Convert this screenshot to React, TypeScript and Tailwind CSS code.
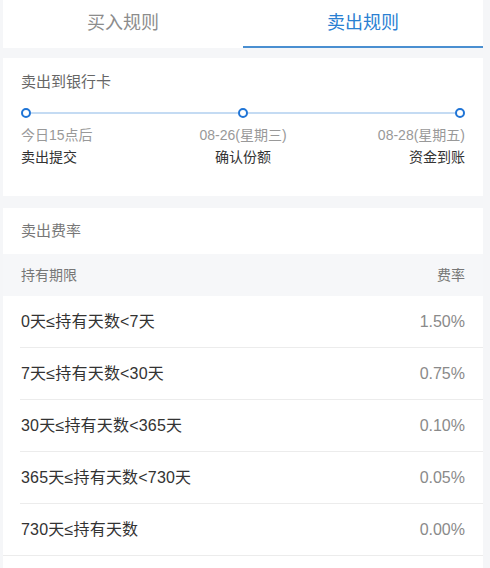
import React from "react";

const font = { fontFamily: '"Liberation Sans", "Noto Sans CJK SC", sans-serif' };

const rows = [
  ["0天≤持有天数<7天", "1.50%"],
  ["7天≤持有天数<30天", "0.75%"],
  ["30天≤持有天数<365天", "0.10%"],
  ["365天≤持有天数<730天", "0.05%"],
  ["730天≤持有天数", "0.00%"],
];

function Dot() {
  return <div className="w-[10px] h-[10px] rounded-full border-[2.5px] border-[#1f74d6] bg-white shrink-0" />;
}

export default function App() {
  return (
    <div className="w-[490px] h-[568px] overflow-hidden bg-[#f5f6f8] pl-[3px]" style={font}>
      <div className="w-[480px]">
        {/* Tabs */}
        <div className="flex h-[48px] bg-white">
          <div className="flex-1 flex items-center justify-center pb-[2px] text-[18px] text-[#8c8c8c]">买入规则</div>
          <div className="flex-1 flex items-center justify-center text-[18px] text-[#2a80d2] border-b-2 border-[#4a8fd1]">卖出规则</div>
        </div>

        {/* Sell to bank card */}
        <div className="mt-[10px] h-[138px] bg-white px-[18px] pt-[13px]">
          <div className="text-[15px] leading-[22px] text-[#666]">卖出到银行卡</div>
          <div className="mt-[15px] flex items-center">
            <Dot />
            <div className="flex-1 h-[2px] bg-[#c4dbf3]" />
            <Dot />
            <div className="flex-1 h-[2px] bg-[#c4dbf3]" />
            <Dot />
          </div>
          <div className="mt-[7px] grid grid-cols-3 text-[14px] leading-[20px] text-[#999]">
            <div className="text-left">今日15点后</div>
            <div className="text-center">08-26(星期三)</div>
            <div className="text-right">08-28(星期五)</div>
          </div>
          <div className="mt-[2px] grid grid-cols-3 text-[14px] leading-[20px] text-[#333]">
            <div className="text-left">卖出提交</div>
            <div className="text-center">确认份额</div>
            <div className="text-right">资金到账</div>
          </div>
        </div>

        {/* Fee rate */}
        <div className="mt-[12px] bg-white h-[360px]">
          <div className="h-[46px] flex items-center px-[18px] text-[15px] text-[#777]">卖出费率</div>
          <div className="h-[42px] flex items-center justify-between px-[18px] bg-[#f6f7f9] text-[14px] text-[#777]">
            <span>持有期限</span>
            <span>费率</span>
          </div>
          {rows.map(([label, value], i) => (
            <div
              key={label}
              className={
                i === rows.length - 1
                  ? "h-[52px] flex items-center justify-between pl-[18px] pr-[18px] border-b border-[#ececec]"
                  : "h-[52px] flex items-center justify-between ml-[17px] pl-[1px] pr-[18px] border-b border-[#ececec]"
              }
            >
              <span className="text-[16px] tracking-[0.2px] text-[#333]">{label}</span>
              <span className="text-[16px] text-[#8a8a8a]">{value}</span>
            </div>
          ))}
        </div>
      </div>
    </div>
  );
}
